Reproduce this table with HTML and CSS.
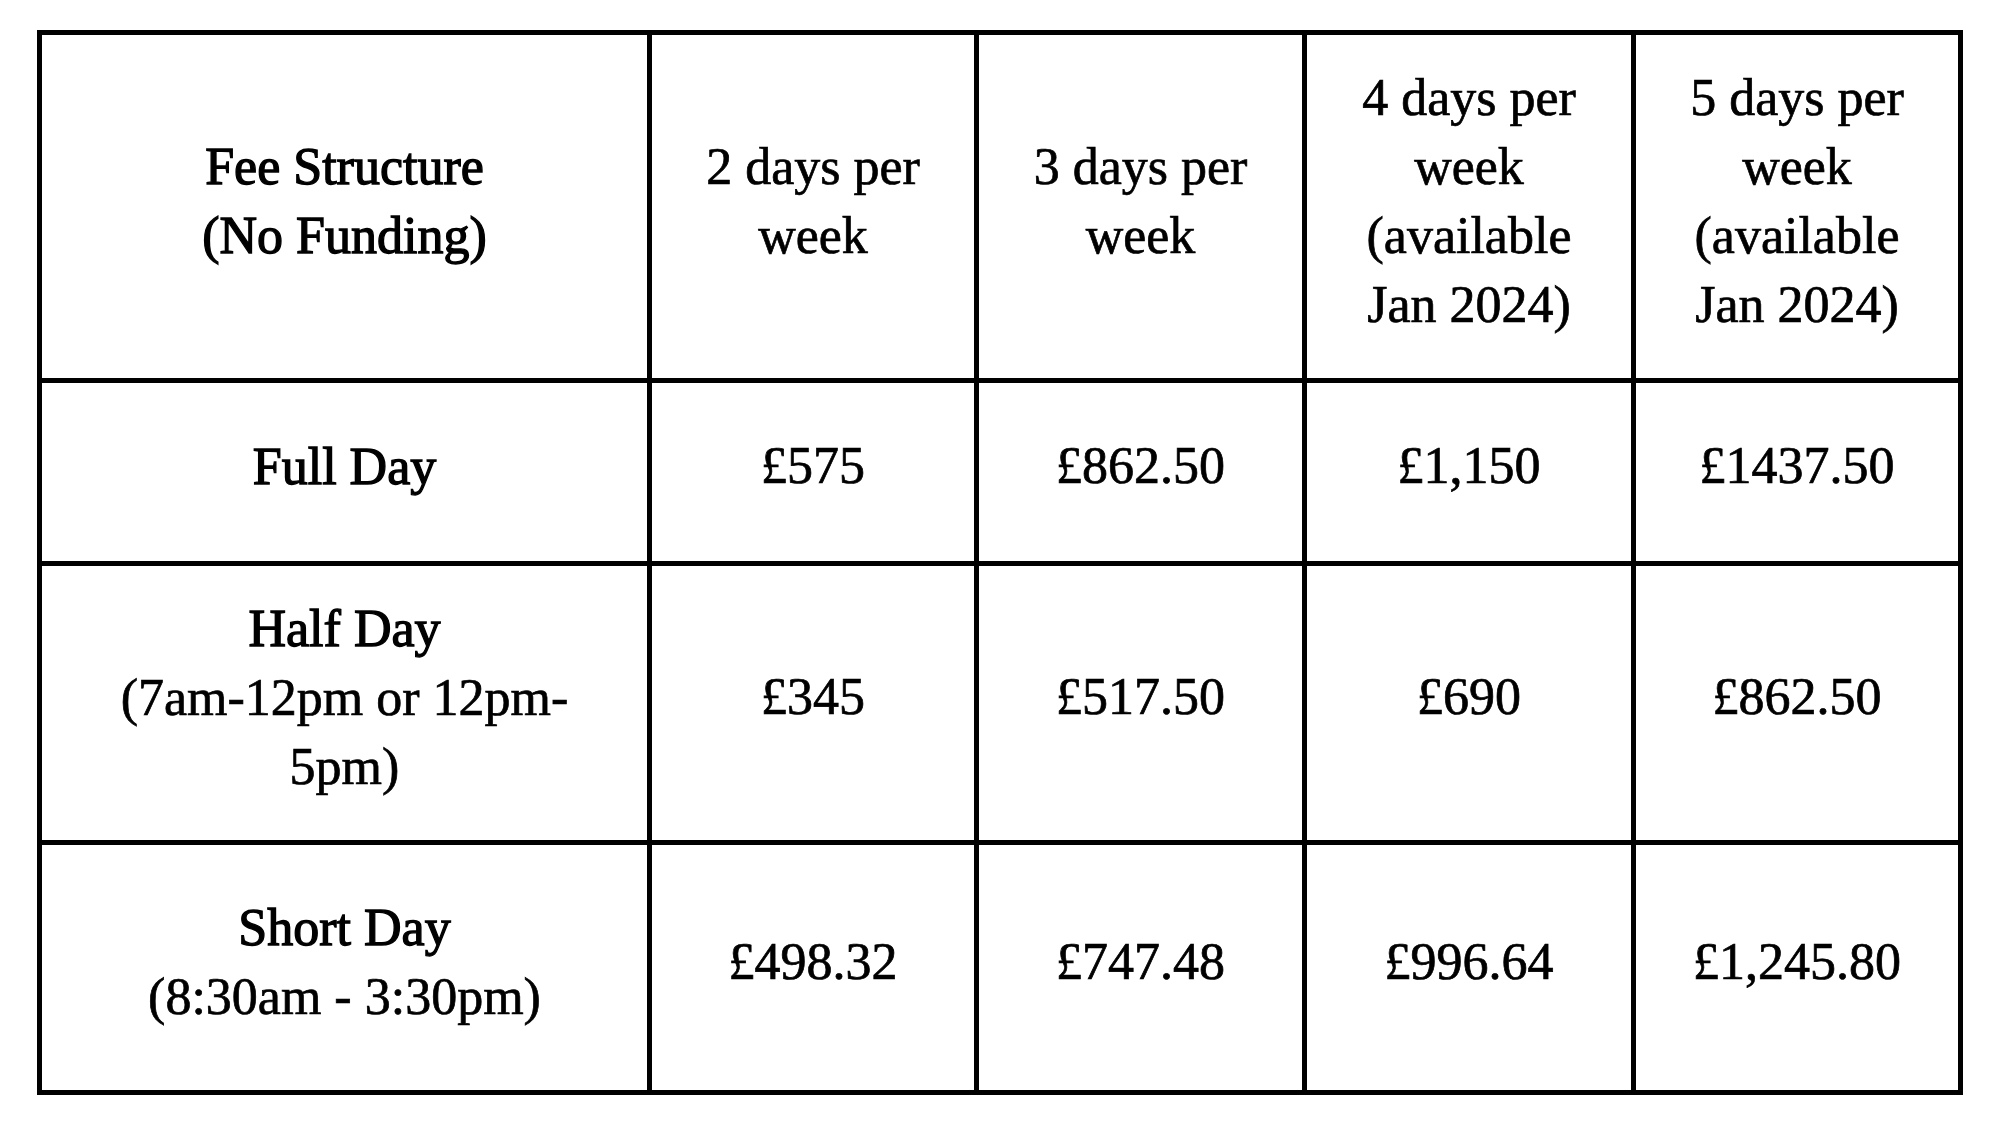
FILE: index.html
```html
<!DOCTYPE html>
<html lang="en">
<head>
<meta charset="utf-8">
<title>Fee Structure</title>
<link rel="stylesheet" href="styles.css">
</head>
<body>
<div class="fees" role="table">
  <div class="cell head strong">Fee Structure<br>(No Funding)</div>
  <div class="cell head">2 days per<br>week</div>
  <div class="cell head">3 days per<br>week</div>
  <div class="cell head">4 days per<br>week<br>(available<br>Jan 2024)</div>
  <div class="cell head">5 days per<br>week<br>(available<br>Jan 2024)</div>

  <div class="cell label"><span class="name">Full Day</span></div>
  <div class="cell price">£575</div>
  <div class="cell price">£862.50</div>
  <div class="cell price">£1,150</div>
  <div class="cell price">£1437.50</div>

  <div class="cell label"><span class="name">Half Day</span><br>(7am-12pm or 12pm-<br>5pm)</div>
  <div class="cell price">£345</div>
  <div class="cell price">£517.50</div>
  <div class="cell price">£690</div>
  <div class="cell price">£862.50</div>

  <div class="cell label"><span class="name">Short Day</span><br>(8:30am - 3:30pm)</div>
  <div class="cell price">£498.32</div>
  <div class="cell price">£747.48</div>
  <div class="cell price">£996.64</div>
  <div class="cell price">£1,245.80</div>
</div>
</body>
</html>
```
FILE: styles.css
```css
html, body {
  margin: 0;
  padding: 0;
  background: #ffffff;
}

body {
  padding: 30px 0 0 37px;
  font-family: "Liberation Serif", "Times New Roman", serif;
  color: #000000;
}

.fees {
  display: grid;
  width: 1926px;
  box-sizing: border-box;
  grid-template-columns: 605px 322px 323px 324px 322px;
  grid-template-rows: 343px 178px 274px 245px;
  gap: 5px;
  padding: 5px;
  background: #000000;
}

.cell {
  display: block;
  align-content: center;
  background: #ffffff;
  text-align: center;
  font-size: 52px;
  line-height: 69px;
  padding-bottom: 12px;
  box-sizing: border-box;
  -webkit-text-stroke: 0.7px #000000;
}

.price {
  padding-bottom: 13px;
}

.strong,
.name {
  -webkit-text-stroke: 1.3px #000000;
}
```
